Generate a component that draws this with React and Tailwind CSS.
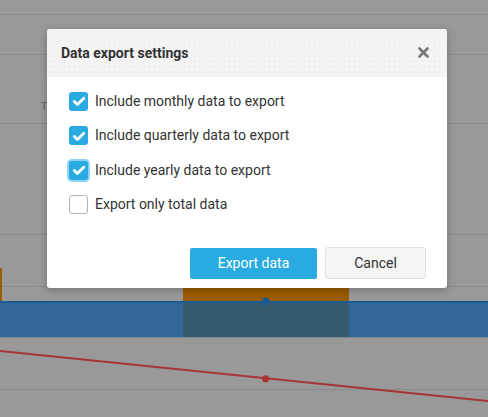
import React from 'react';

const options = [
  { label: 'Include monthly data to export', checked: true },
  { label: 'Include quarterly data to export', checked: true },
  { label: 'Include yearly data to export', checked: true, focused: true },
  { label: 'Export only total data', checked: false },
];

function Checkbox({ checked, focused }) {
  if (!checked) {
    return <span className="block w-[19px] h-[19px] rounded-[3px] border border-[#b3b3b3] bg-white" />;
  }
  return (
    <span
      className={
        'flex items-center justify-center w-[19px] h-[19px] rounded-[3px] bg-[#29abe2] ' +
        (focused ? 'ring-2 ring-[#8fd3f7]' : '')
      }
    >
      <svg width="14" height="14" viewBox="0 0 14 14" fill="none">
        <path d="M2.3 7.4l3.1 3L11.8 4.2" stroke="white" strokeWidth="2.8" strokeLinecap="round" strokeLinejoin="round" />
      </svg>
    </span>
  );
}

function Chart() {
  // background chart, dimmed by the modal overlay
  return (
    <svg width="488" height="417" viewBox="0 0 488 417" className="block">
      <rect width="488" height="417" fill="#999999" />
      {[14.5, 54.5, 123.5, 234.5, 286.5, 389.5].map((y) => (
        <line key={y} x1="0" x2="488" y1={y} y2={y} stroke="#8b8b8b" strokeWidth="1" />
      ))}
      <text x="41" y="110" fontSize="11" fill="#6e5f5f" fontFamily="Roboto, sans-serif">Total</text>
      <rect x="0" y="268" width="2" height="33" fill="#995c00" />
      <rect x="183" y="270" width="166" height="31" fill="#995c00" />
      <rect x="0" y="301" width="488" height="36" fill="#336899" />
      <rect x="183" y="301" width="166" height="36" fill="#365b6c" />
      <line x1="0" x2="488" y1="302" y2="302" stroke="#1c5a92" strokeWidth="2" />
      <line x1="0" x2="488" y1="337.5" y2="337.5" stroke="#7c8795" strokeWidth="1" />
      <circle cx="265.5" cy="301.5" r="4" fill="#1c5a92" />
      <line x1="0" y1="351" x2="488" y2="401" stroke="#a83434" strokeWidth="2" />
      <circle cx="265.5" cy="378.7" r="3.5" fill="#a83434" />
    </svg>
  );
}

export default function App() {
  return (
    <div className="relative w-[488px] h-[417px] overflow-hidden font-['Roboto',sans-serif]">
      <Chart />

      {/* Modal */}
      <div className="absolute left-[47px] top-[29px] w-[400px] h-[259px] flex flex-col bg-white rounded-[3px] shadow-[0_2px_8px_rgba(0,0,0,0.25)] overflow-hidden">
        <div className="h-[48px] flex items-center justify-between pl-[14px] pr-[18px] bg-[#f4f4f5] bg-[radial-gradient(#e6e6e8_0.7px,transparent_0.7px)] bg-[size:5px_5px]">
          <span className="text-[14px] font-bold text-[#333333]">Data export settings</span>
          <svg width="11" height="11" viewBox="0 0 11 11" className="mt-[-2px]">
            <path d="M1.5 1.5l8 8M9.5 1.5l-8 8" stroke="#777777" strokeWidth="2.6" strokeLinecap="round" />
          </svg>
        </div>

        <div className="flex flex-col gap-[15.5px] pt-[14.5px] pl-[22px]">
          {options.map((o) => (
            <label key={o.label} className="flex items-center gap-[7px] h-[19px]">
              <Checkbox checked={o.checked} focused={o.focused} />
              <span className="text-[14px] text-[#333333]">{o.label}</span>
            </label>
          ))}
        </div>

        <div className="mt-auto mb-[9px] flex justify-end gap-[8px] pr-[21px]">
          <button className="w-[127px] h-[31px] mt-[1px] rounded-[2px] bg-[#29abe2] text-white text-[14px]">
            Export data
          </button>
          <button className="w-[101px] h-[32px] rounded-[3px] border border-[#e0e0e0] bg-[#f4f4f4] text-[#333333] text-[14px]">
            Cancel
          </button>
        </div>
      </div>
    </div>
  );
}
